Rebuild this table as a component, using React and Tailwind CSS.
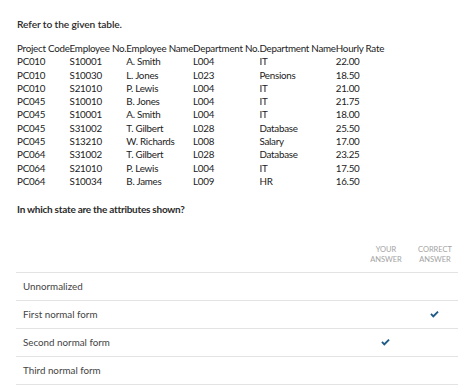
import React from "react";

const rows = [
  ["PC010", "S10001", "A. Smith", "L004", "IT", "22.00"],
  ["PC010", "S10030", "L. Jones", "L023", "Pensions", "18.50"],
  ["PC010", "S21010", "P. Lewis", "L004", "IT", "21.00"],
  ["PC045", "S10010", "B. Jones", "L004", "IT", "21.75"],
  ["PC045", "S10001", "A. Smith", "L004", "IT", "18.00"],
  ["PC045", "S31002", "T. Gilbert", "L028", "Database", "25.50"],
  ["PC045", "S13210", "W. Richards", "L008", "Salary", "17.00"],
  ["PC064", "S31002", "T. Gilbert", "L028", "Database", "23.25"],
  ["PC064", "S21010", "P. Lewis", "L004", "IT", "17.50"],
  ["PC064", "S10034", "B. James", "L009", "HR", "16.50"],
];

const headers = ["Project Code", "Employee No.", "Employee Name", "Department No.", "Department Name", "Hourly Rate"];

const options = [
  { label: "Unnormalized", yours: false, correct: false },
  { label: "First normal form", yours: false, correct: true },
  { label: "Second normal form", yours: true, correct: false },
  { label: "Third normal form", yours: false, correct: false },
];

// filled check like the quiz tool's icon font
const Check = () => (
  <svg width="9" height="7" viewBox="0 0 9 7" className="text-[#1d5b87]">
    <path d="M0.3 3.6 L1.6 2.3 L3.3 4 L7.4 0 L8.7 1.3 L3.3 6.7 Z" fill="currentColor" />
  </svg>
);

export default function App() {
  return (
    <div className="w-[474px] h-[392px] bg-white text-[#333] overflow-hidden" style={{ fontFamily: "Lato, 'Open Sans', sans-serif" }}>
      <div className="pl-[17px] pt-[17px]">
        <p className="text-[10.2px] font-semibold leading-[14px] tracking-[-0.1px] text-[#2b2b2b]">Refer to the given table.</p>

        <table className="mt-[11px] text-[9.8px] leading-[13.3px] tracking-[-0.25px] text-[#222] border-collapse">
          <thead>
            <tr>
              {headers.map((h) => (
                <th key={h} className="p-0 text-left font-normal whitespace-nowrap">{h}</th>
              ))}
            </tr>
          </thead>
          <tbody>
            {rows.map((r, i) => (
              <tr key={i}>
                {r.map((c, j) => (
                  <td key={j} className="p-0 text-left whitespace-nowrap">{c}</td>
                ))}
              </tr>
            ))}
          </tbody>
        </table>

        <p className="mt-[14px] text-[10px] font-bold leading-[14px] tracking-[-0.25px] text-[#2b2b2b]">In which state are the attributes shown?</p>
      </div>

      <div className="mx-[16px] mt-[29px]">
        <div className="flex justify-end pb-[7px]">
          <div className="w-[50px] text-center text-[7.5px] leading-[10px] text-[#a3a3a3] uppercase">Your<br />Answer</div>
          <div className="w-[48px] text-center text-[7.5px] leading-[10px] text-[#a3a3a3] uppercase mr-[-1px]">Correct<br />Answer</div>
        </div>
        <div className="border-t border-[#e3e3e3]">
          {options.map((o) => (
            <div key={o.label} className="flex items-center h-[28px] border-b border-[#e3e3e3]">
              <div className="flex-1 pl-[7px] text-[9.8px] text-[#444]">{o.label}</div>
              <div className="w-[50px] flex justify-center">{o.yours && <Check />}</div>
              <div className="w-[48px] flex justify-center">{o.correct && <Check />}</div>
            </div>
          ))}
        </div>
      </div>
    </div>
  );
}
